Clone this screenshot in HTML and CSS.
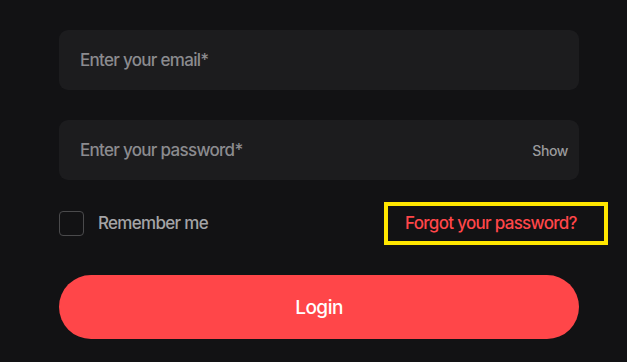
FILE: index.html
```html
<!DOCTYPE html>
<html>
<head>
<meta charset="utf-8">
<link rel="stylesheet" href="styles.css">
</head>
<body>
<form class="form">
  <div class="field"><span class="placeholder">Enter your email*</span></div>
  <div class="field field-pass"><span class="placeholder">Enter your password*</span><span class="show">Show</span></div>
  <div class="row">
    <label class="remember"><span class="box"></span><span class="remember-text">Remember me</span></label>
    <a class="forgot">Forgot your password?</a>
  </div>
  <button class="login" type="button">Login</button>
</form>
</body>
</html>
```
FILE: styles.css
```css
html, body {
  margin: 0;
  padding: 0;
  background: #121214;
  font-family: Inter, "Noto Sans", sans-serif;
}
.form {
  width: 520px;
  margin-left: 59px;
  padding-top: 30px;
  display: flex;
  flex-direction: column;
}
.field {
  height: 60px;
  background: #1c1c1e;
  border-radius: 9px;
  display: flex;
  align-items: center;
  justify-content: space-between;
  padding: 0 11px 0 21px;
  box-sizing: border-box;
}
.field-pass {
  margin-top: 30px;
}
.placeholder {
  color: #8b8b8f;
  font-size: 17px;
  font-weight: 500;
  letter-spacing: -0.7px;
}
.show {
  color: #9a9a9c;
  font-size: 14px;
  font-weight: 500;
  letter-spacing: -0.4px;
}
.row {
  margin-top: 22px;
  height: 43px;
  display: flex;
  align-items: center;
  justify-content: space-between;
  margin-right: -29px;
}
.remember {
  display: flex;
  align-items: center;
  margin-top: -1px;
}
.box {
  width: 25px;
  height: 25px;
  box-sizing: border-box;
  border: 1px solid #4a4a4c;
  border-radius: 4px;
}
.remember-text {
  margin-left: 14px;
  color: #a4a4a6;
  font-size: 17px;
  font-weight: 500;
  letter-spacing: -0.7px;
}
.forgot {
  box-sizing: border-box;
  width: 224px;
  height: 43px;
  border: 4px solid #ffe600;
  padding-left: 17px;
  padding-bottom: 2px;
  display: flex;
  align-items: center;
  color: #ff4649;
  font-size: 17px;
  font-weight: 500;
  letter-spacing: -0.7px;
}
.login {
  margin-top: 30px;
  height: 64px;
  border: none;
  border-radius: 32px;
  background: #ff4649;
  color: #ffffff;
  font-family: Inter, "Noto Sans", sans-serif;
  font-size: 19px;
  font-weight: 500;
  letter-spacing: -0.5px;
}
```
